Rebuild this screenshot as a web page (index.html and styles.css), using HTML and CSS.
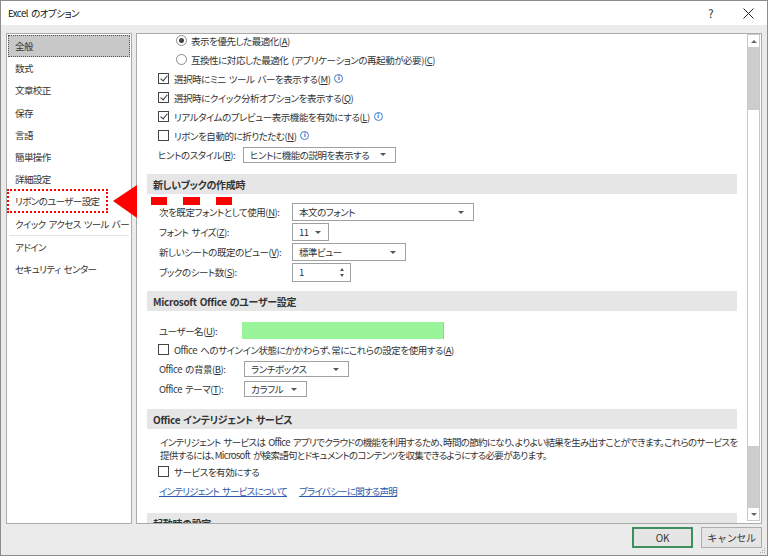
FILE: index.html
```html
<!DOCTYPE html>
<html lang="ja">
<head>
  <meta charset="UTF-8" />
  <meta name="viewport" content="width=device-width, initial-scale=1.0" />
  <title>Excel のオプション</title>
  <link rel="stylesheet" href="styles.css">
</head>
<body>
  <div class="window">
    <div class="titlebar">
      <span class="title">Excel のオプション</span>
      <span class="help">?</span>
      <svg class="close" width="11" height="11" viewBox="0 0 11 11">
        <path d="M0.5 0.5 L10.5 10.5 M10.5 0.5 L0.5 10.5" stroke="#222" stroke-width="1" fill="none" />
      </svg>
    </div>

    <div class="body">
      <ul class="sidebar">
        <li class="active">全般</li>
        <li>数式</li>
        <li>文章校正</li>
        <li>保存</li>
        <li>言語</li>
        <li>簡単操作</li>
        <li>詳細設定</li>
        <li>リボンのユーザー設定</li>
        <li>クイック アクセス ツール バー</li>
        <li class="sep"></li>
        <li>アドイン</li>
        <li>セキュリティ センター</li>
      </ul>

      <div class="panel">
        <div class="content">
          <div class="scrolled">
            <div class="row indent-r"><span class="radio on"></span>表示を優先した最適化(<u>A</u>)</div>
            <div class="row indent-r"><span class="radio"></span>互換性に対応した最適化 (アプリケーションの再起動が必要)(<u>C</u>)</div>
            <div class="row indent-c"><span class="check on"></span>選択時にミニ ツール バーを表示する(<u>M</u>)<span class="info">i</span></div>
            <div class="row indent-c"><span class="check on"></span>選択時にクイック分析オプションを表示する(<u>Q</u>)</div>
            <div class="row indent-c"><span class="check on"></span>リアルタイムのプレビュー表示機能を有効にする(<u>L</u>)<span class="info">i</span></div>
            <div class="row indent-c"><span class="check"></span>リボンを自動的に折りたたむ(<u>N</u>)<span class="info">i</span></div>
            <div class="row indent-c">
              <span class="lbl lbl-hint">ヒントのスタイル(<u>R</u>):</span>
              <span class="select w-hint">ヒントに機能の説明を表示する</span>
            </div>

            <div class="header h-1">新しいブックの作成時</div>
            <div class="group g-book">
              <div class="row tall indent-l">
                <span class="lbl lbl-book">次を既定フォントとして使用(<u>N</u>):</span>
                <span class="select tallsel w-font">本文のフォント</span>
              </div>
              <div class="row tall indent-l">
                <span class="lbl lbl-book">フォント サイズ(<u>Z</u>):</span>
                <span class="select tallsel w-size">11</span>
              </div>
              <div class="row tall indent-l">
                <span class="lbl lbl-book">新しいシートの既定のビュー(<u>V</u>):</span>
                <span class="select tallsel w-view">標準ビュー</span>
              </div>
              <div class="row tall indent-l">
                <span class="lbl lbl-book">ブックのシート数(<u>S</u>):</span>
                <span class="spin">1<span class="spin-up"></span><span class="spin-down"></span></span>
              </div>
            </div>

            <div class="header h-2">Microsoft Office のユーザー設定</div>
            <div class="group g-user">
              <div class="row indent-l">
                <span class="lbl lbl-user">ユーザー名(<u>U</u>):</span>
                <span class="user-input"></span>
              </div>
              <div class="row indent-c"><span class="check"></span>Office へのサインイン状態にかかわらず、常にこれらの設定を使用する(<u>A</u>)</div>
              <div class="row tall indent-l">
                <span class="lbl lbl-office">Office の背景(<u>B</u>):</span>
                <span class="select w-bg">ランチボックス</span>
              </div>
              <div class="row tall indent-l">
                <span class="lbl lbl-office">Office テーマ(<u>T</u>):</span>
                <span class="select w-theme">カラフル</span>
              </div>
            </div>

            <div class="header h-3">Office インテリジェント サービス</div>
            <div class="group g-intel">
              <p class="desc">インテリジェント サービスは Office アプリでクラウドの機能を利用するため、時間の節約になり、よりよい結果を生み出すことができます。これらのサービスを<br>提供するには、Microsoft が検索語句とドキュメントのコンテンツを収集できるようにする必要があります。</p>
              <div class="row indent-c"><span class="check"></span>サービスを有効にする</div>
              <div class="row indent-l links">
                <a href="#">インテリジェント サービスについて</a>
                <a href="#">プライバシーに関する声明</a>
              </div>
            </div>

            <div class="header h-4">起動時の設定</div>
          </div>
        </div>

        <div class="scrollbar">
          <div class="sb-btn up"></div>
          <div class="sb-gray top"></div>
          <div class="sb-track"></div>
          <div class="sb-gray bottom"></div>
          <div class="sb-btn down"></div>
        </div>
      </div>
    </div>

    <div class="footer">
      <button class="btn btn-ok">OK</button>
      <button class="btn">キャンセル</button>
    </div>

    <svg class="grip" width="6" height="6" viewBox="0 0 6 6">
      <rect x="4" y="0" width="1" height="1" fill="#aaa" />
      <rect x="2" y="2" width="1" height="1" fill="#aaa" />
      <rect x="4" y="2" width="1" height="1" fill="#aaa" />
      <rect x="0" y="4" width="1" height="1" fill="#aaa" />
      <rect x="2" y="4" width="1" height="1" fill="#aaa" />
      <rect x="4" y="4" width="1" height="1" fill="#aaa" />
    </svg>

    <!-- annotation: red box + arrow -->
    <div class="mark-box"></div>
    <svg class="mark-arrow" width="120" height="34" viewBox="0 0 120 34">
      <polygon points="0,16 24,0 24,33" fill="#ff0000" />
      <rect x="38" y="12" width="16" height="8" fill="#ff0000" />
      <rect x="70" y="12" width="17" height="8" fill="#ff0000" />
      <rect x="103" y="12" width="16" height="8" fill="#ff0000" />
    </svg>
  </div>
</body>
</html>
```

FILE: styles.css
```css
:root {
  --text: #333;
  --line: #ababab;
  --dialog: #ebebeb;
  --head: #e6e6e6;
  --link: #2b5cab;
}

* {
  box-sizing: border-box;
}

body {
  margin: 0;
  font-family: "Noto Sans CJK JP", "Noto Sans", sans-serif;
  font-size: 9.5px;
  letter-spacing: -0.45px;
  word-spacing: 1.5px;
  font-feature-settings: "palt";
  color: var(--text);
  background: #fff;
}

.window {
  position: relative;
  width: 768px;
  height: 556px;
  border: 1px solid #8c8c8c;
  background: var(--dialog);
  display: flex;
  flex-direction: column;
}

/* title bar */
.titlebar {
  height: 24px;
  background: #fff;
  display: flex;
  align-items: center;
  padding-left: 7px;
  padding-right: 13px;
}

.title {
  flex: 1;
  color: #111;
  font-size: 9.5px;
  letter-spacing: -0.5px;
}

.help {
  font-size: 11px;
  color: #222;
  margin-right: 30px;
}

/* body */
.body {
  display: flex;
  gap: 4px;
  padding: 8px 5px 0 5px;
  height: 499px;
}

.sidebar {
  list-style: none;
  margin: 0;
  padding: 1px;
  width: 126px;
  height: 491px;
  background: #fff;
  border: 1px solid var(--line);
}

.sidebar li {
  height: 22.2px;
  line-height: 22.2px;
  padding-left: 7px;
  white-space: nowrap;
  letter-spacing: -0.6px;
}

.sidebar li.active {
  background: #c8c8c8;
  border: 1px dotted #555;
  line-height: 20.2px;
  padding-left: 6px;
}

.sidebar li.sep {
  height: 1px;
  margin: 0 1px;
  background: #e3e3e3;
}

.panel {
  flex: 1;
  height: 491px;
  background: #fff;
  border: 1px solid var(--line);
  display: flex;
  overflow: hidden;
}

.content {
  flex: 1;
  overflow: hidden;
}

.scrolled {
  margin-top: -3px;
}

.row {
  height: 19px;
  display: flex;
  align-items: center;
  white-space: nowrap;
}

.row.tall {
  height: 20px;
}

.indent-r { padding-left: 39px; }
.indent-c { padding-left: 21px; }
.indent-l { padding-left: 22px; }

.radio {
  width: 11px;
  height: 11px;
  border: 1px solid #8a8a8a;
  border-radius: 50%;
  margin-right: 4px;
  display: flex;
  align-items: center;
  justify-content: center;
}

.radio.on::after {
  content: "";
  width: 5px;
  height: 5px;
  border-radius: 50%;
  background: #444;
}

.check {
  position: relative;
  width: 11px;
  height: 11px;
  border: 1px solid #444;
  margin-right: 5px;
  flex: none;
}

.check.on::after {
  content: "";
  position: absolute;
  left: 2.5px;
  top: 0px;
  width: 3px;
  height: 6px;
  border-right: 1.2px solid #333;
  border-bottom: 1.2px solid #333;
  transform: rotate(40deg);
}

.info {
  width: 9px;
  height: 9px;
  margin-left: 4px;
  border: 1px solid #3a7fd0;
  border-radius: 50%;
  color: #3a7fd0;
  font-family: "DejaVu Sans", sans-serif;
  font-size: 6.5px;
  font-weight: bold;
  letter-spacing: 0;
  line-height: 7px;
  text-align: center;
}

.lbl {
  flex: none;
}

.lbl-hint { width: 85px; }
.lbl-book { width: 133px; }
.lbl-user { width: 83px; }
.lbl-office { width: 85px; }

.select {
  position: relative;
  height: 16px;
  border: 1px solid #a0a0a0;
  background: #fff;
  padding-left: 6px;
  display: flex;
  align-items: center;
}

.select.tallsel {
  height: 18px;
}

.select::after {
  content: "";
  position: absolute;
  right: 9px;
  top: 50%;
  margin-top: -1.5px;
  border-left: 3px solid transparent;
  border-right: 3px solid transparent;
  border-top: 3px solid #555;
}

.w-hint { width: 153px; }
.w-font { width: 182px; }
.w-size { width: 37px; }
.w-size::after { right: 7px; }
.w-view { width: 114px; }
.w-bg { width: 105px; }
.w-theme { width: 63px; }

.spin {
  position: relative;
  width: 59px;
  height: 19px;
  border: 1px solid #a0a0a0;
  padding-left: 6px;
  display: flex;
  align-items: center;
}

.spin-up,
.spin-down {
  position: absolute;
  right: 6px;
  border-left: 2.5px solid transparent;
  border-right: 2.5px solid transparent;
}

.spin-up {
  top: 4px;
  border-bottom: 3px solid #555;
}

.spin-down {
  bottom: 4px;
  border-top: 3px solid #555;
}

.user-input {
  width: 202px;
  height: 17px;
  background: #9af59a;
  border-right: 1px solid #b8b8b8;
}

.header {
  height: 20px;
  margin: 0 10px;
  padding-left: 6px;
  background: var(--head);
  font-size: 10px;
  letter-spacing: -0.3px;
  word-spacing: 1px;
  font-weight: bold;
  display: flex;
  align-items: center;
  white-space: nowrap;
}

.h-1 { margin-top: 10px; }
.h-2 { margin-top: 9px; }
.h-3 { margin-top: 10px; }
.h-4 { margin-top: 13px; }

.g-book { padding-top: 8px; }
.g-user { padding-top: 10px; }
.g-intel { padding-top: 7px; }

.desc {
  margin: 0;
  padding-left: 23px;
  line-height: 13px;
  letter-spacing: -0.68px;
  white-space: nowrap;
}

.links {
  gap: 12px;
}

.links a {
  color: var(--link);
  letter-spacing: -0.75px;
  text-decoration: underline;
}

/* scrollbar */
.scrollbar {
  width: 13px;
  height: 487px;
  margin: 0 1px 0 0;
  border: 1px solid #c8c8c8;
  background: #fff;
  display: flex;
  flex-direction: column;
}

.sb-btn {
  height: 12px;
  display: flex;
  align-items: center;
  justify-content: center;
}

.sb-btn::after {
  content: "";
  border-left: 3px solid transparent;
  border-right: 3px solid transparent;
}

.sb-btn.up::after {
  border-bottom: 3px solid #666;
}

.sb-btn.down::after {
  border-top: 3px solid #666;
}

.sb-gray {
  background: #cdcdcd;
}

.sb-gray.top { height: 63px; }
.sb-gray.bottom { height: 62px; }

.sb-track {
  flex: 1;
}

/* footer */
.footer {
  display: flex;
  justify-content: flex-end;
  gap: 8px;
  padding: 3px 5px 0 0;
}

.btn {
  width: 61px;
  height: 21px;
  border: 1px solid #adadad;
  background: #e5e5e5;
  font-family: inherit;
  font-size: 10px;
  letter-spacing: -0.3px;
  color: var(--text);
  padding: 0;
}

.btn-ok {
  border: 2px solid #3f8f5c;
}

.grip {
  position: absolute;
  right: 1px;
  bottom: 1px;
}

/* annotation overlays */
.mark-box {
  position: absolute;
  left: 6px;
  top: 188px;
  width: 101px;
  height: 24px;
  border: 2px dotted #ff0000;
}

.mark-arrow {
  position: absolute;
  left: 112px;
  top: 184px;
}
```
